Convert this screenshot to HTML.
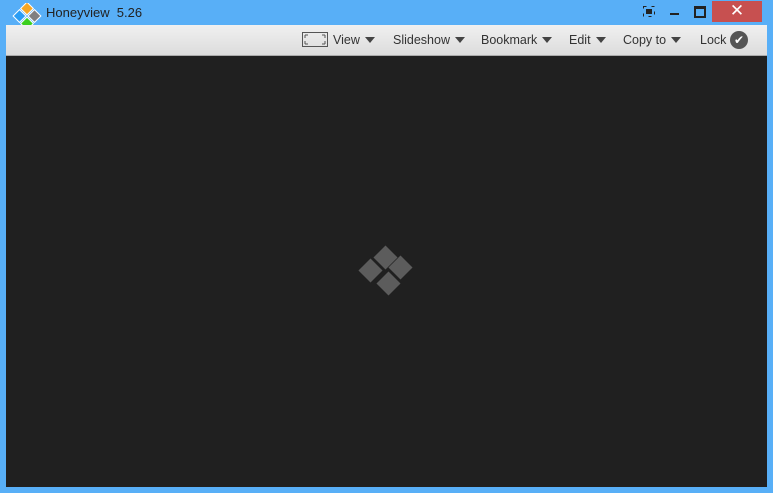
<!DOCTYPE html><html><head><style>
body{margin:0;width:773px;height:493px;background:#58aff7;position:relative;overflow:hidden;font-family:"Liberation Sans",sans-serif}
.t{position:absolute;left:46px;top:5px;font-size:13px;color:#222}
.tb{position:absolute;left:6px;top:25px;width:761px;height:30px;background:linear-gradient(#f0f0f0,#dcdcdc);border-bottom:1px solid #aaa}
.it{position:absolute;top:8px;font-size:12.5px;color:#333}
.ar{display:inline-block;width:0;height:0;border-left:5px solid transparent;border-right:5px solid transparent;border-top:6px solid #444;margin-left:5px;vertical-align:1px}
.dk{position:absolute;left:6px;top:56px;width:761px;height:431px;background:#202020}
.sq{position:absolute;width:17px;height:17px;background:#5c5c5c;transform:rotate(45deg)}
</style></head><body>
<svg style="position:absolute;left:12px;top:3px" width="32" height="28" viewBox="0 0 32 28">
<g stroke="#fff" stroke-width="1">
<rect x="10.5" y="1" width="9" height="9" fill="#f6a623" transform="rotate(45 15 5.5)"/>
<rect x="3" y="8.5" width="9" height="9" fill="#2a9df4" transform="rotate(45 7.5 13)"/>
<rect x="18" y="8.5" width="9" height="9" fill="#808080" transform="rotate(45 22.5 13)"/>
<rect x="10.5" y="16" width="9" height="9" fill="#3ccf1f" transform="rotate(45 15 20.5)"/></g></svg>
<div class="t">Honeyview&nbsp; 5.26</div>
<svg style="position:absolute;left:643px;top:6px" width="12" height="11"><rect x="0.5" y="0.5" width="11" height="10" fill="none" stroke="#222" stroke-dasharray="3 5"/><rect x="3" y="3" width="6" height="5" fill="#222"/></svg>
<div style="position:absolute;left:670px;top:13px;width:9px;height:2px;background:#222"></div>
<div style="position:absolute;left:694px;top:6px;width:8px;height:7px;border:2px solid #222;border-top-width:3px"></div>
<div style="position:absolute;left:712px;top:1px;width:50px;height:21px;background:#c75050;color:#fff;text-align:center;font-size:17px;line-height:20px">✕</div>
<div class="tb">
<svg style="position:absolute;left:296px;top:7px" width="26" height="15"><rect x="0.5" y="0.5" width="25" height="14" fill="none" stroke="#555"/><path d="M3 3h3M3 3v3M23 3h-3M23 3v3M3 12h3M3 12v-3M23 12h-3M23 12v-3" stroke="#555"/></svg>
<span class="it" style="left:327px">View<span class="ar"></span></span>
<span class="it" style="left:387px">Slideshow<span class="ar"></span></span>
<span class="it" style="left:475px">Bookmark<span class="ar"></span></span>
<span class="it" style="left:563px">Edit<span class="ar"></span></span>
<span class="it" style="left:617px">Copy to<span class="ar"></span></span>
<span class="it" style="left:694px">Lock</span>
<div style="position:absolute;left:724px;top:6px;width:18px;height:18px;border-radius:50%;background:#555;color:#fff;font-size:12px;text-align:center;line-height:18px">✔</div>
</div>
<div class="dk"></div>
<div class="sq" style="left:377px;top:249px"></div>
<div class="sq" style="left:392px;top:259px"></div>
<div class="sq" style="left:362px;top:262px"></div>
<div class="sq" style="left:380px;top:275px"></div>
</body></html>
